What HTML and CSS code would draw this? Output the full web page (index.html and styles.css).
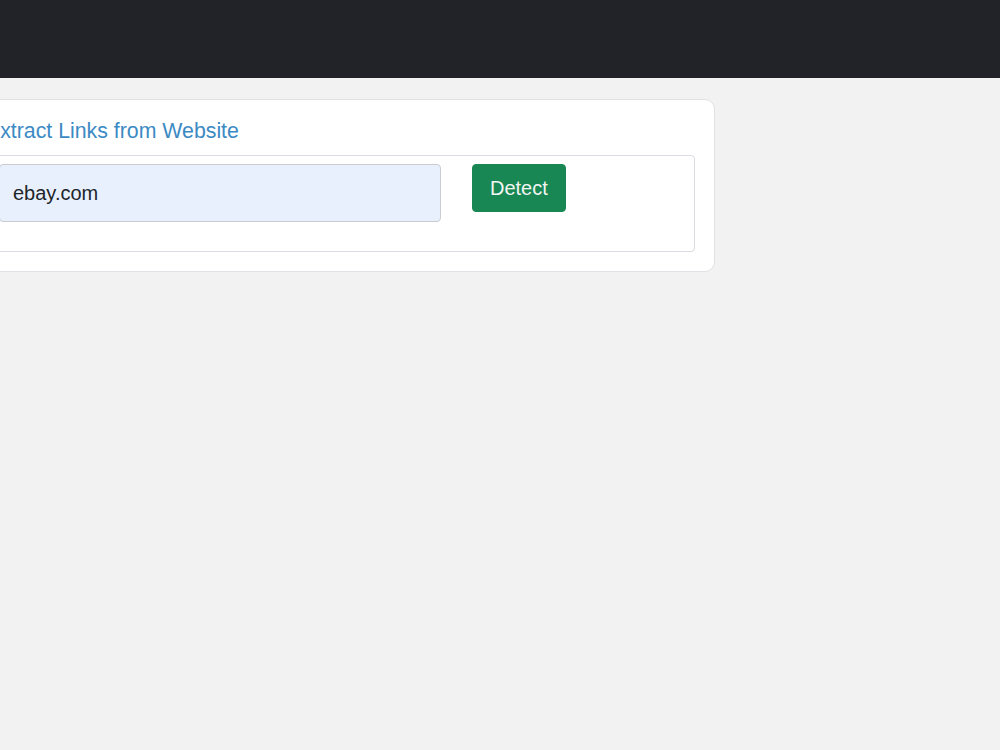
FILE: index.html
```html
<!DOCTYPE html>
<html lang="en">
<head>
    <meta charset="UTF-8">
    <meta name="viewport" content="width=device-width, initial-scale=1.0">
    <title>Extract Links from Website</title>
    <link rel="stylesheet" href="styles.css">
</head>
<body>
    <nav class="navbar"></nav>

    <main class="page">
        <div class="card">
            <h2 class="card-title">Extract Links from Website</h2>
            <div class="tool-box">
                <form class="tool-form">
                    <input type="text" class="url-input" value="ebay.com">
                    <button type="button" class="btn-detect">Detect</button>
                </form>
            </div>
        </div>
    </main>
</body>
</html>
```

FILE: styles.css
```css
body {
    margin: 0;
    font-family: 'Liberation Sans', Arial, sans-serif;
    background: #f2f2f2;
    color: #212529;
    overflow: hidden;
}

.navbar {
    height: 78px;
    background: #222328;
}

.page {
    margin-left: -35px;
    padding-top: 21px;
    width: 750px;
}

.card {
    background: #fff;
    border: 1px solid #dfe1e4;
    border-radius: 10px;
    padding: 18px 19px 19px 20px;
}

.card-title {
    margin: 0 0 11px 0;
    font-size: 21.3px;
    font-weight: normal;
    line-height: 26px;
    color: #3c8ac3;
}

.tool-box {
    border: 1px solid #d9dce0;
    border-radius: 4px;
    padding: 8px 12px 29px 12px;
}

.tool-form {
    display: flex;
    align-items: flex-start;
    gap: 31px;
}

.url-input {
    width: 442px;
    height: 58px;
    box-sizing: border-box;
    padding: 0 13px;
    font-family: 'Liberation Sans', Arial, sans-serif;
    font-size: 20px;
    color: #212529;
    background: #e8f0fe;
    border: 1px solid #c9ccd1;
    border-radius: 4px;
}

.btn-detect {
    height: 48px;
    padding: 0 17px;
    font-family: 'Liberation Sans', Arial, sans-serif;
    font-size: 20px;
    color: #f1f5f2;
    background: #198754;
    border: 1px solid #198754;
    border-radius: 4px;
}
```
